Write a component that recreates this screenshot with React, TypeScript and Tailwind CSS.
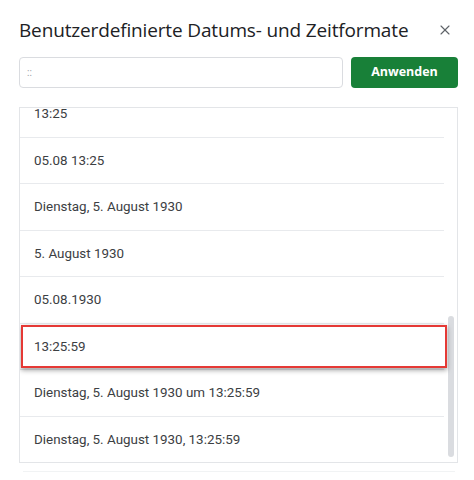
import { X } from "lucide-react";

const ROWS = [
  "13:25",
  "05.08 13:25",
  "Dienstag, 5. August 1930",
  "5. August 1930",
  "05.08.1930",
  "13:25:59",
  "Dienstag, 5. August 1930 um 13:25:59",
  "Dienstag, 5. August 1930, 13:25:59",
];

export default function App() {
  return (
    <div className="h-[480px] w-[474px] bg-white pl-[19px] pr-[16px] pt-[18px] font-['Roboto',sans-serif]">
      {/* Header */}
      <div className="flex h-[24px] items-center justify-between">
        <h1 className="font-['Open_Sans',sans-serif] text-[19px] leading-[24px] tracking-[-0.15px] text-[#202124]">
          Benutzerdefinierte Datums- und Zeitformate
        </h1>
        <X className="mr-[5px] size-[16px] text-[#5f6368]" strokeWidth={1.7} />
      </div>

      {/* Input + apply */}
      <div className="mt-[15px] flex gap-[8px]">
        <div className="flex h-[31px] w-[324px] items-center rounded-[4px] border border-[#dadce0] px-[7px]">
          <span className="text-[10px] leading-none text-[#9aa0a6]">::</span>
        </div>
        <button
          className="h-[31px] flex-1 rounded-[4px] bg-[#188038] font-['Open_Sans',sans-serif] text-[12.5px] font-bold text-white"
          type="button"
        >
          Anwenden
        </button>
      </div>

      {/* Format list */}
      <div className="relative mt-[19px] flex h-[356px] overflow-hidden border border-[#e3e5e8]">
        <div className="-mt-[16.8px] w-[424px]">
          {ROWS.map((row, i) => (
            <div
              className={`flex h-[46.5px] items-center pl-[14px] text-[13.4px] leading-none text-[#3c4043] ${
                i < ROWS.length - 1 ? "border-b border-[#e8eaed]" : ""
              }`}
              key={row}
            >
              {row}
            </div>
          ))}
        </div>
        {/* Scrollbar */}
        <div className="flex flex-1 justify-center">
          <div className="mt-[208px] h-[141px] w-[6px] rounded-full bg-[#dadce0]" />
        </div>
        {/* Highlight annotation */}
        <div className="absolute left-[1px] top-[217px] h-[43px] w-[426px] border-2 border-[#e53935] shadow-[0_2px_5px_rgba(0,0,0,0.4)]" />
      </div>
      <div className="ml-[4px] mr-[3px] mt-[8px] border-t border-[#f1f3f4]" />
    </div>
  );
}
